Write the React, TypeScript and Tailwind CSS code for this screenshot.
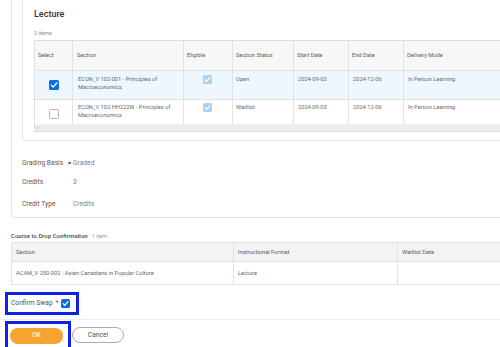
import React from "react";

const font = { fontFamily: "Roboto, 'Liberation Sans', sans-serif" };

function CheckIcon({ className }: { className?: string }) {
  return (
    <svg viewBox="0 0 10 10" className={className}>
      <path d="M2.3 5.2 L4.2 7 L7.8 3" fill="none" stroke="white" strokeWidth="1.3" strokeLinecap="round" strokeLinejoin="round" />
    </svg>
  );
}

export default function App() {
  return (
    <div className="w-[500px] h-[347px] overflow-hidden bg-white relative text-[#333]" style={font}>
      {/* Outer card */}
      <div className="ml-[11px] w-[620px] h-[218px] border-l border-b border-[#e2e2e2] rounded-bl-[5px] pl-[10px]">
        {/* Inner Lecture card */}
        <div className="w-[600px] h-[141px] border-l border-b border-[#e2e2e2] rounded-bl-[5px] pl-[11px] pt-[8px]">
          <div className="text-[9px] font-medium leading-[12px] text-[#333]">Lecture</div>
          <div className="text-[5.5px] leading-[8px] text-[#8a8a8a] mt-[9px]">2 items</div>
          <div className="mt-[3px] w-[560px] border-t border-l border-[#dedede]">
            <div className="flex h-[30px] bg-[#f7f7f7] border-b border-[#e2e2e2] text-[5.7px] text-[#5a5a5a]">
              <div className="w-[38px] border-r border-[#e2e2e2] flex items-center pl-[3px]">Select</div>
              <div className="w-[111px] border-r border-[#e2e2e2] flex items-center pl-[4px]">Section</div>
              <div className="w-[49px] border-r border-[#e2e2e2] flex items-center pl-[3px]">Eligible</div>
              <div className="w-[61px] border-r border-[#e2e2e2] flex items-center pl-[3px]">Section Status</div>
              <div className="w-[55px] border-r border-[#e2e2e2] flex items-center pl-[3px]">Start Date</div>
              <div className="w-[55px] border-r border-[#e2e2e2] flex items-center pl-[3px]">End Date</div>
              <div className="flex-1 flex items-center pl-[3px]">Delivery Mode</div>
            </div>
            {/* Row 1 */}
            <div className="flex h-[29px] bg-[#edf7fd] border-b border-[#e2e2e2] text-[5.7px] text-[#6a6a6a] leading-[8px]">
              <div className="w-[38px] border-r border-[#e2e2e2] flex items-center justify-center">
                <div className="w-[10px] h-[10px] rounded-[1.5px] bg-[#0a6fe0] flex items-center justify-center">
                  <CheckIcon className="w-[10px] h-[10px]" />
                </div>
              </div>
              <div className="w-[111px] border-r border-[#e2e2e2] pl-[5px] pt-[4px]">
                ECON_V 102-001 - Principles of
                <br />
                Macroeconomics
              </div>
              <div className="w-[49px] border-r border-[#e2e2e2] pt-[4px] pl-[19px]">
                <div className="w-[9px] h-[9px] rounded-[1.5px] bg-[#abd0f2] flex items-center justify-center">
                  <CheckIcon className="w-[9px] h-[9px]" />
                </div>
              </div>
              <div className="w-[61px] border-r border-[#e2e2e2] pl-[3px] pt-[4px]">Open</div>
              <div className="w-[55px] border-r border-[#e2e2e2] pl-[4px] pt-[4px]">2024-09-03</div>
              <div className="w-[55px] border-r border-[#e2e2e2] pl-[4px] pt-[4px]">2024-12-06</div>
              <div className="flex-1 pl-[4px] pt-[4px]">In Person Learning</div>
            </div>
            {/* Row 2 */}
            <div className="flex h-[24px] bg-white text-[5.7px] text-[#6a6a6a] leading-[8px]">
              <div className="w-[38px] border-r border-[#e2e2e2] flex items-center justify-center pt-[3px]">
                <div className="w-[10px] h-[10px] rounded-[1.5px] bg-white border border-[#b5b5b5]" />
              </div>
              <div className="w-[111px] border-r border-[#e2e2e2] pl-[5px] pt-[3px]">
                ECON_V 102-HH222W - Principles of
                <br />
                Macroeconomics
              </div>
              <div className="w-[49px] border-r border-[#e2e2e2] pt-[3px] pl-[19px]">
                <div className="w-[9px] h-[9px] rounded-[1.5px] bg-[#abd0f2] flex items-center justify-center">
                  <CheckIcon className="w-[9px] h-[9px]" />
                </div>
              </div>
              <div className="w-[61px] border-r border-[#e2e2e2] pl-[3px] pt-[3px]">Waitlist</div>
              <div className="w-[55px] border-r border-[#e2e2e2] pl-[4px] pt-[3px]">2024-09-03</div>
              <div className="w-[55px] border-r border-[#e2e2e2] pl-[4px] pt-[3px]">2024-12-06</div>
              <div className="flex-1 pl-[4px] pt-[3px]">In Person Learning</div>
            </div>
            {/* scrollbar */}
            <div className="h-[8px] bg-[#ececec] border-b border-[#dcdcdc] flex items-center pl-[2px] text-[5px] text-[#777] leading-none">
              ‹
            </div>
          </div>
        </div>

        {/* Fields */}
        <div className="text-[6.7px] leading-[10px] pt-[17px]">
          <div className="flex items-center h-[10px]">
            <span className="w-[46px] text-[#555]">Grading Basis</span>
            <span className="w-[5px] flex justify-start">
              <span className="w-[2.5px] h-[2.5px] rounded-full bg-[#e0303a]" />
            </span>
            <span className="text-[#808080]">Graded</span>
          </div>
          <div className="flex items-center h-[10px] mt-[9px]">
            <span className="w-[51px] text-[#555]">Credits</span>
            <span className="text-[#808080]">3</span>
          </div>
          <div className="flex items-center h-[10px] mt-[12px]">
            <span className="w-[51px] text-[#555]">Credit Type</span>
            <span className="text-[#808080]">Credits</span>
          </div>
        </div>
      </div>

      {/* Course to drop */}
      <div className="ml-[11px] mt-[13px] text-[6px] leading-[10px] flex items-center">
        <span className="font-medium text-[#4a4a4a]">Course to Drop Confirmation</span>
        <span className="ml-[4px] text-[#999] text-[5.5px]">1 item</span>
      </div>
      <div className="ml-[11px] mt-[1px] w-[600px] border-t border-l border-b border-[#e2e2e2]">
        <div className="flex h-[19px] bg-[#f3f3f3] border-b border-[#e2e2e2] text-[5.7px] text-[#5a5a5a]">
          <div className="w-[222px] border-r border-[#e2e2e2] flex items-center pl-[4px]">Section</div>
          <div className="w-[164px] border-r border-[#e2e2e2] flex items-center pl-[4px]">Instructional Format</div>
          <div className="flex-1 flex items-center pl-[4px]">Waitlist Date</div>
        </div>
        <div className="flex h-[22px] bg-white text-[5.7px] text-[#6a6a6a]">
          <div className="w-[222px] border-r border-[#e2e2e2] flex items-center pl-[4px]">
            ACAM_V 250-002 - Asian Canadians in Popular Culture
          </div>
          <div className="w-[164px] border-r border-[#e2e2e2] flex items-center pl-[4px]">Lecture</div>
          <div className="flex-1" />
        </div>
      </div>

      {/* Confirm Swap */}
      <div className="ml-[5px] mt-[7px] w-[74px] h-[23px] border-[3px] border-[#1020e8] flex items-center pl-[3px] text-[6.7px] text-[#555]">
        <span>Confirm Swap</span>
        <span className="ml-[3px] text-[#e0303a] text-[7px] leading-none">*</span>
        <div className="ml-[2px] w-[9px] h-[9px] rounded-[1.5px] bg-[#0a6fe0] flex items-center justify-center">
          <CheckIcon className="w-[9px] h-[9px]" />
        </div>
      </div>

      {/* Bottom bar */}
      <div className="mt-[4px] border-t border-[#ececec] flex items-start">
        <div className="ml-[5px] mt-[1px] w-[66px] h-[30px] border-[3px] border-[#1020e8] flex items-center pl-[2px]">
          <div className="w-[53px] h-[16px] rounded-full bg-[#f7a330] text-white text-[6.5px] font-medium flex items-center justify-center">
            OK
          </div>
        </div>
        <div className="ml-[1px] mt-[7px] w-[52px] h-[16px] rounded-full border border-[#aaa] bg-white text-[#555] text-[6.7px] flex items-center justify-center">
          Cancel
        </div>
      </div>
    </div>
  );
}
